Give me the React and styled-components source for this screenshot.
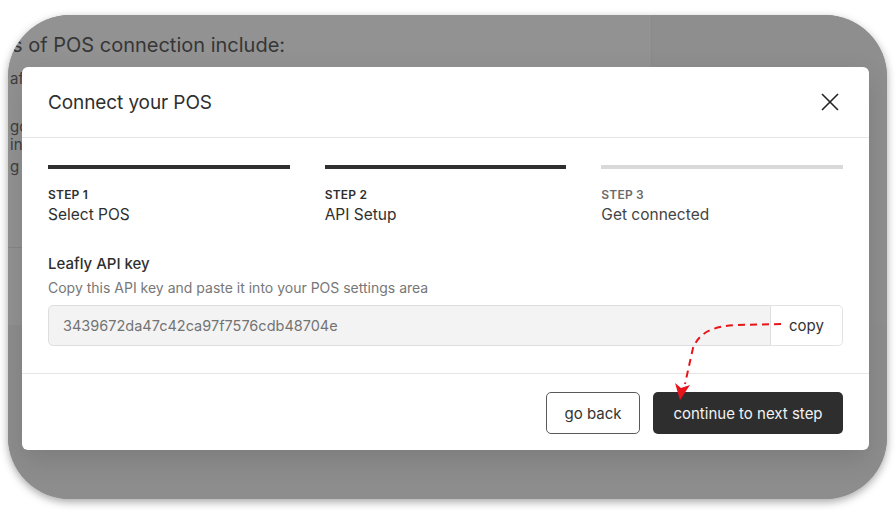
import React from "react";
import styled, { createGlobalStyle } from "styled-components";

const GlobalStyle = createGlobalStyle`
  html, body {
    margin: 0;
    padding: 0;
    background: #ffffff;
  }
  body {
    font-family: Inter, "Noto Sans", "Liberation Sans", sans-serif;
    color: #2f2f2f;
  }
  * {
    box-sizing: border-box;
  }
`;

const steps = [
  { label: "STEP 1", title: "Select POS", done: true },
  { label: "STEP 2", title: "API Setup", done: true },
  { label: "STEP 3", title: "Get connected", done: false },
];

const App = () => {
  return (
    <>
      <GlobalStyle />
      <Page>
        <Frame>
          <LeftPane>
            <BgHeading>s of POS connection include:</BgHeading>
            <BgLine $top={14}>afly menu and ordering</BgLine>
            <BgLine $top={30}>goes live instantly</BgLine>
            <BgLine $top={0}>inventory updates</BgLine>
            <BgLine $top={4}>g in real time</BgLine>
            <BgRule $top={70} />
          </LeftPane>
          <RightPane />
          <BottomStrip />

          <Modal>
            <Header>
              <Title>Connect your POS</Title>
              <CloseButton type="button" aria-label="close">
                <svg width="18" height="18" viewBox="0 0 18 18">
                  <path
                    d="M1 1 L17 17 M17 1 L1 17"
                    stroke="#222"
                    strokeWidth="1.6"
                    fill="none"
                  />
                </svg>
              </CloseButton>
            </Header>

            <Body>
              <Steps>
                {steps.map((step) => (
                  <Step key={step.label}>
                    <StepBar $done={step.done} />
                    <StepLabel $done={step.done}>{step.label}</StepLabel>
                    <StepTitle $done={step.done}>{step.title}</StepTitle>
                  </Step>
                ))}
              </Steps>

              <FieldLabel>Leafly API key</FieldLabel>
              <FieldHint>Copy this API key and paste it into your POS settings area</FieldHint>
              <KeyRow>
                <KeyInput>3439672da47c42ca97f7576cdb48704e</KeyInput>
                <CopyButton type="button">copy</CopyButton>
              </KeyRow>
            </Body>

            <Footer>
              <BackButton type="button">go back</BackButton>
              <NextButton type="button">continue to next step</NextButton>
            </Footer>
          </Modal>
        </Frame>

        <Annotation width="896" height="519" viewBox="0 0 896 519">
          <path
            d="M781 324 L738 325 C712 326 699 333 693 348 L685 384"
            stroke="#e8141c"
            strokeWidth="2"
            strokeDasharray="7 5"
            fill="none"
          />
          <polygon points="680,400 675,383 681,388 690,385" fill="#e8141c" />
        </Annotation>
      </Page>
    </>
  );
};

export default App;

const Page = styled.div`
  position: relative;
  width: 896px;
  height: 519px;
  padding: 15px 9px 0 8px;
`;

const Frame = styled.div`
  position: relative;
  height: 484px;
  border-radius: 62px;
  overflow: hidden;
  background: #8e8e8e;
  display: grid;
  grid-template-columns: 644px 1fr;
  grid-template-rows: 310px 1fr;
  box-shadow: 0 3px 8px rgba(0, 0, 0, 0.35);
`;

const LeftPane = styled.div`
  background: #929292;
  border-right: 1px solid #8a8a8a;
  padding-top: 18px;
  display: flex;
  flex-direction: column;
  color: #3a3a3a;
`;

const RightPane = styled.div`
  background: #8e8e8e;
`;

const BottomStrip = styled.div`
  grid-column: 1 / -1;
  background: #8d8d8d;
`;

const BgHeading = styled.div`
  font-size: 20px;
  line-height: 24px;
  margin-left: 4px;
  color: #363636;
`;

const BgLine = styled.div`
  font-size: 15px;
  line-height: 20px;
  margin-top: ${(p) => p.$top - 2}px;
  padding-left: 2px;
  color: #3e3e3e;
  white-space: nowrap;
`;

const BgRule = styled.div`
  height: 1px;
  background: #868686;
  margin-top: ${(p) => p.$top}px;
`;

const Modal = styled.div`
  position: absolute;
  left: 14px;
  top: 52px;
  width: 847px;
  height: 383px;
  background: #ffffff;
  border-radius: 6px;
  display: flex;
  flex-direction: column;
  box-shadow: 0 10px 28px rgba(0, 0, 0, 0.12);
`;

const Header = styled.div`
  height: 71px;
  padding: 0 30px 0 26px;
  display: flex;
  align-items: center;
  justify-content: space-between;
  border-bottom: 1px solid #e5e5e5;
`;

const Title = styled.h2`
  margin: 0;
  font-size: 19px;
  font-weight: 400;
  color: #2f2f2f;
  letter-spacing: -0.1px;
`;

const CloseButton = styled.button`
  border: none;
  background: none;
  padding: 0;
  width: 18px;
  height: 18px;
  display: flex;
  cursor: pointer;
`;

const Body = styled.div`
  padding: 27px 26px 27px;
  border-bottom: 1px solid #e5e5e5;
`;

const Steps = styled.div`
  display: grid;
  grid-template-columns: repeat(3, 1fr);
  gap: 35px;
`;

const Step = styled.div`
  display: flex;
  flex-direction: column;
`;

const StepBar = styled.div`
  height: 4px;
  background: ${(p) => (p.$done ? "#2f2f2f" : "#d9d9d9")};
`;

const StepLabel = styled.div`
  margin-top: 18px;
  font-size: 12px;
  line-height: 16px;
  font-weight: 600;
  letter-spacing: 0.2px;
  color: ${(p) => (p.$done ? "#2f2f2f" : "#6b6b6b")};
`;

const StepTitle = styled.div`
  margin-top: 2px;
  font-size: 15.5px;
  line-height: 20px;
  color: ${(p) => (p.$done ? "#2f2f2f" : "#444444")};
`;

const FieldLabel = styled.div`
  margin-top: 29px;
  font-size: 15px;
  line-height: 20px;
  font-weight: 500;
  color: #2f2f2f;
`;

const FieldHint = styled.div`
  margin-top: 4px;
  font-size: 14px;
  line-height: 20px;
  color: #777777;
`;

const KeyRow = styled.div`
  margin-top: 7px;
  display: flex;
  height: 41px;
`;

const KeyInput = styled.div`
  flex: 1;
  display: flex;
  align-items: center;
  padding: 0 14px;
  background: #f3f3f3;
  border: 1px solid #dedede;
  border-radius: 5px 0 0 5px;
  font-size: 14.5px;
  color: #737373;
`;

const CopyButton = styled.button`
  width: 72px;
  background: #ffffff;
  border: 1px solid #e2e2e2;
  border-left: none;
  border-radius: 0 5px 5px 0;
  font-family: inherit;
  font-size: 15px;
  color: #333333;
  padding: 0;
`;

const Footer = styled.div`
  flex: 1;
  display: flex;
  align-items: center;
  justify-content: flex-end;
  gap: 13px;
  padding: 2px 26px 0;
`;

const BackButton = styled.button`
  width: 94px;
  height: 42px;
  background: #ffffff;
  border: 1px solid #5a5a5a;
  border-radius: 5px;
  font-family: inherit;
  font-size: 15px;
  color: #333333;
  padding: 0;
`;

const NextButton = styled.button`
  width: 190px;
  height: 42px;
  background: #2e2e2e;
  border: none;
  border-radius: 5px;
  font-family: inherit;
  font-size: 15px;
  color: #f2f2f2;
  padding: 0;
`;

const Annotation = styled.svg`
  position: absolute;
  left: 0;
  top: 0;
  pointer-events: none;
`;
